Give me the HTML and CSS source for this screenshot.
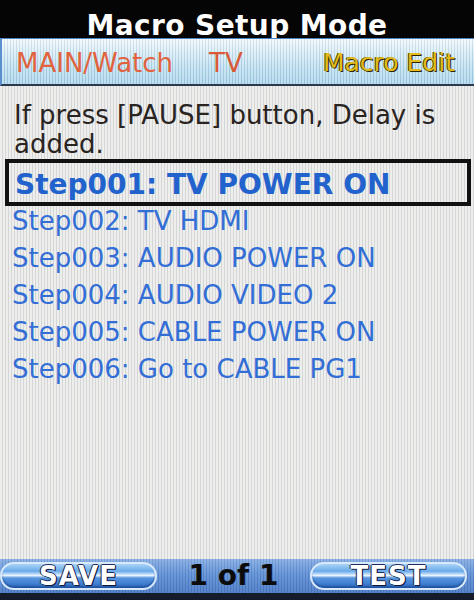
FILE: index.html
```html
<!DOCTYPE html>
<html lang="en">
<head>
<meta charset="utf-8">
<title>Macro Setup Mode</title>
<link rel="stylesheet" href="styles.css">
</head>
<body>
<div class="screen">
  <header class="title">Macro Setup Mode</header>
  <nav class="tabs">
    <span class="crumb">MAIN/Watch</span>
    <span class="device">TV</span>
    <span class="mode">Macro Edit</span>
  </nav>
  <main class="content">
    <p class="note">If press [PAUSE] button, Delay is<br>added.</p>
    <div class="selected">Step001: TV POWER ON</div>
    <ul class="steps">
      <li>Step002: TV HDMI</li>
      <li>Step003: AUDIO POWER ON</li>
      <li>Step004: AUDIO VIDEO 2</li>
      <li>Step005: CABLE POWER ON</li>
      <li>Step006: Go to CABLE PG1</li>
    </ul>
  </main>
  <footer class="bar">
    <button class="pill">SAVE</button>
    <span class="page">1 of 1</span>
    <button class="pill">TEST</button>
  </footer>
</div>
</body>
</html>
```
FILE: styles.css
```css
* { box-sizing: border-box; }

html, body {
  margin: 0;
  padding: 0;
  background: #000;
}

.screen {
  width: 474px;
  height: 600px;
  display: flex;
  flex-direction: column;
  font-family: "DejaVu Sans", Verdana, sans-serif;
  overflow: hidden;
}

.title {
  height: 38px;
  padding-top: 13px;
  line-height: 25px;
  background: #050505;
  color: #fff;
  font-weight: bold;
  font-size: 28px;
  letter-spacing: 0.4px;
  text-align: center;
  white-space: nowrap;
}

.tabs {
  height: 48px;
  display: flex;
  align-items: center;
  padding: 2px 19px 0 14px;
  border-top: 1px solid #4b82c4;
  border-left: 2px solid #5c8fce;
  border-bottom: 2px solid #2b3a4c;
  font-size: 26px;
  white-space: nowrap;
  background:
    repeating-linear-gradient(90deg, rgba(255,255,255,0.3) 0 2px, rgba(110,130,150,0.18) 2px 3px),
    linear-gradient(180deg, #f2f9fd 0%, #d6ecf7 25%, #b4dbef 65%, #9fd0ea 100%);
}

.crumb { color: #e2623e; }
.device { color: #d95a36; margin-left: 36px; }
.mode {
  margin-left: auto;
  color: #e2bb1c;
  font-size: 25px;
  text-shadow: 1px 1px 0 #2a2400, -1px 0 0 #5a4a00;
}

.content {
  flex: 1;
  padding-top: 15px;
  background:
    repeating-linear-gradient(90deg, #eeeeec 0 2px, #d3d5d7 2px 3px);
}

.note {
  margin: 0;
  padding-left: 14px;
  font-size: 26px;
  line-height: 29px;
  color: #29241f;
  white-space: nowrap;
}

.selected {
  margin: 0 3px 0 5px;
  height: 47px;
  border: 4px solid #111;
  padding: 4px 0 0 6px;
  font-size: 28px;
  font-weight: bold;
  line-height: 35px;
  color: #2262cc;
  white-space: nowrap;
}

.steps {
  list-style: none;
  margin: 0;
  padding: 0 0 0 12px;
  display: flex;
  flex-direction: column;
  gap: 6px;
}

.steps li {
  font-size: 26px;
  line-height: 31px;
  color: #326ed6;
  white-space: nowrap;
}

.bar {
  height: 41px;
  display: grid;
  grid-template-columns: 157px 1fr 157px;
  align-items: center;
  padding: 0 7px 0 0;
  border-bottom: 7px solid #141b2a;
  background:
    repeating-linear-gradient(90deg, rgba(255,255,255,0.08) 0 2px, rgba(0,0,40,0.08) 2px 3px),
    linear-gradient(180deg, #86aee4 0%, #5f90d6 45%, #4a7bc6 100%);
}

.pill {
  height: 28px;
  margin: 0;
  padding: 0;
  border: 2px solid #d7e9fa;
  border-radius: 14px;
  font-family: "DejaVu Sans", Verdana, sans-serif;
  font-weight: bold;
  font-size: 26px;
  line-height: 22px;
  letter-spacing: 1px;
  color: #fff;
  text-shadow: 1px 1px 0 #0c1a40, -1px 0 0 #2a1a40, 0 -1px 0 #1b2d5c, 1px 0 0 #1b2d5c;
  background: linear-gradient(180deg, #a8d4f6 0%, #6aaaea 30%, #e8f4ff 48%, #5896e0 58%, #2e6cc4 100%);
  box-shadow: inset 0 -2px 2px rgba(10,40,100,0.4);
}

.page {
  text-align: center;
  font-weight: bold;
  font-size: 28px;
  line-height: 30px;
  color: #0c0c0c;
  white-space: nowrap;
}
```
